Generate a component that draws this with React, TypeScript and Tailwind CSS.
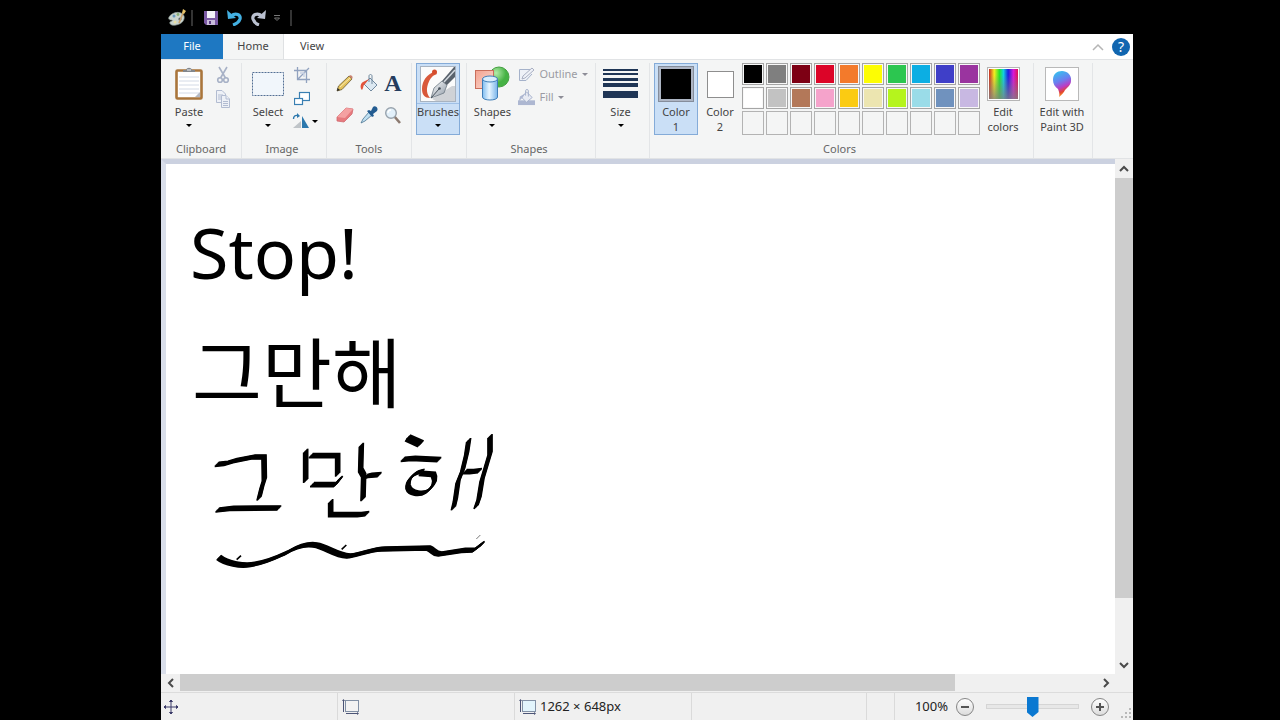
import React, { useState } from "react";

const palette = [
  ["Black", "#000000"],
  ["Gray-50%", "#7f7f7f"],
  ["Dark red", "#7d0014"],
  ["Red", "#dc0428"],
  ["Orange", "#f37a2b"],
  ["Yellow", "#fdfd03"],
  ["Green", "#2cc650"],
  ["Turquoise", "#0caee3"],
  ["Indigo", "#3f3fc8"],
  ["Purple", "#9a349f"],
  ["White", "#ffffff"],
  ["Gray-25%", "#c2c2c2"],
  ["Brown", "#b37859"],
  ["Rose", "#f5a3cb"],
  ["Gold", "#fbcb12"],
  ["Light yellow", "#ece5b0"],
  ["Lime", "#b5f41d"],
  ["Light turquoise", "#9adce8"],
  ["Blue-gray", "#7092be"],
  ["Lavender", "#c8b8e2"],
];

// The calligraphy nib is a short diagonal line dragged along each stroke
const nib = [-6, -4, -2, 0, 2, 4, 6];

const strokes = [
  "M110 133L138 130L165 122L220 111L252 111L253 178L246 200L237 236",
  "M112 270L155 265L298 264",
  "M377 92V183",
  "M392 107L473 107V164",
  "M396 194L466 194L482 174",
  "M544 74L542 150L551 166L549 238",
  "M556 170L570 166L599 164",
  "M452 243V284L538 284L562 281",
  "M681 56L720 74",
  "M684 51L725 69",
  "M668 118L700 115L778 119",
  "M728 154C700 157 682 180 684 200C690 222 725 225 743 213C765 195 768 178 760 163L722 160",
  "M866 60L860 100L848 150L834 185L826 240L820 265",
  "M854 155L875 155L900 152",
  "M930 48L930 100L918 140L906 180L897 235L888 261",
  "M116 412C138 430 188 440 218 433C260 427 290 412 320 398C350 380 380 371 405 375C440 380 465 405 505 408C540 405 570 388 610 387L745 384C762 390 760 402 780 402L850 391L882 390L908 370",
];

const Caret = ({ className = "fill-black" }: { className?: string }) => (
  <svg viewBox="0 0 6 3" className={`h-[3px] w-[6px] shrink-0 ${className}`}>
    <path d="M0 0H6L3 3Z" />
  </svg>
);

const Chevron = ({ turn, className = "stroke-[#4a4a4a]" }: { turn: string; className?: string }) => (
  <svg viewBox="0 0 10 10" className={`h-[10px] w-[10px] ${turn} ${className}`} fill="none" strokeWidth="2">
    <path d="M1 7L5 3L9 7" />
  </svg>
);

const Group = ({
  label,
  className,
  children,
}: {
  label?: string;
  className: string;
  children: React.ReactNode;
}) => (
  <section
    aria-label={label}
    className={`flex shrink-0 flex-col border-r border-[#e3e5e7] ${className}`}
  >
    <div className="flex h-[72px] shrink-0 justify-center">{children}</div>
    <p className="mt-1.5 text-center leading-4 text-[#666]">{label}</p>
  </section>
);

const BigButton = ({
  icon,
  lines,
  active = false,
  caret = false,
  split = false,
}: {
  icon: React.ReactNode;
  lines: string[];
  active?: boolean;
  caret?: boolean;
  split?: boolean;
}) => (
  <button
    type="button"
    className={`flex h-[72px] w-[44px] shrink-0 flex-col items-center border ${
      active ? "border-[#84abd8] bg-[#cadff6]" : "border-transparent"
    }`}
  >
    <span
      className={`flex h-[40px] w-full shrink-0 items-center justify-center ${
        split ? "border-b border-[#9fc0e6]" : ""
      }`}
    >
      {icon}
    </span>
    {lines.map((line) => (
      <span key={line} className="leading-[15px] whitespace-nowrap">
        {line}
      </span>
    ))}
    {caret && (
      <span className="flex h-3 items-center">
        <Caret />
      </span>
    )}
  </button>
);

const IconButton = ({
  label,
  className = "h-6 w-6",
  children,
}: {
  label: string;
  className?: string;
  children: React.ReactNode;
}) => (
  <button
    type="button"
    aria-label={label}
    className={`flex shrink-0 items-center justify-center ${className}`}
  >
    {children}
  </button>
);

const QuickAccess = () => (
  <header className="flex h-[34px] shrink-0 items-center bg-black pt-0.5 pl-1.5">
    <svg viewBox="0 0 20 20" className="h-5 w-5">
      <path d="M2 9C6 3 15 3 17 8C18 12 15 16 9 17C5 18 2 16 3 14C4 13 6 13 5 12C3 12 1 12 2 9Z" fill="#c9d3cd" stroke="#8b9a93" strokeWidth=".7" />
      <circle cx="7" cy="8" r="1.500" fill="#6798bd" />
      <circle cx="11" cy="6.500" r="1.400" fill="#86ad76" />
      <circle cx="8" cy="14" r="1.500" fill="#e8dfa6" />
      <circle cx="13" cy="11" r="1.600" fill="#55606a" />
      <path d="M12 15L16 5" stroke="#c9a069" strokeWidth="1.600" />
      <path d="M15 5L16 1L19 3L17 6Z" fill="#e7c268" />
    </svg>
    <span className="ml-1 h-4 w-[2px] bg-[#343434]" />
    <IconButton label="Save" className="ml-2 h-5 w-5">
      <svg viewBox="0 0 16 16" className="h-4 w-4">
        <path d="M1 1H15V15H3L1 13Z" fill="#7c5aa5" />
        <path d="M4 1H12V8H4Z" fill="#f4f2fa" />
        <path d="M4 10H12V15H4Z" fill="#c9bddb" />
        <path d="M6 11H8V14H6Z" fill="#5d3d85" />
      </svg>
    </IconButton>
    <IconButton label="Undo" className="ml-1 h-5 w-5">
      <svg viewBox="0 0 16 16" className="h-4 w-4">
        <path d="M4 6C9 2 14 5 13 9C12 12 9 14 6 15" fill="none" stroke="#43b0e2" strokeWidth="3.200" />
        <path d="M0 0L9 8L1 9Z" fill="#43b0e2" />
      </svg>
    </IconButton>
    <IconButton label="Redo" className="ml-[3px] h-5 w-5">
      <svg viewBox="0 0 16 16" className="h-4 w-4">
        <path d="M12 6C7 2 2 5 3 9C4 12 6 14 9 15" fill="none" stroke="#bac1d0" strokeWidth="3.200" />
        <path d="M16 0L7 8L15 9Z" fill="#bac1d0" />
      </svg>
    </IconButton>
    <IconButton label="Customize Quick Access Toolbar" className="h-5 w-[18px]">
      <svg viewBox="0 0 8 8" className="h-2 w-2" fill="none" stroke="#777">
        <path d="M1 1.500H7M1.500 4H6.500L4 6.500Z" />
      </svg>
    </IconButton>
    <span className="ml-1 h-4 w-[2px] bg-[#343434]" />
  </header>
);

const Tabs = () => (
  <nav className="flex h-[25px] shrink-0 bg-white text-[#444]">
    <button type="button" className="w-[62px] bg-[#1e78c2] text-white">
      File
    </button>
    <button type="button" className="w-[61px] border-r border-[#dfe1e3] bg-[#f4f5f5]">
      Home
    </button>
    <button type="button" className="w-[56px]">
      View
    </button>
    <div className="ml-auto flex items-center gap-1.5 pr-[3px]">
      <IconButton label="Minimize the Ribbon" className="h-5 w-4">
        <svg viewBox="0 0 12 8" className="h-2 w-3" fill="none" stroke="#b5b5b5" strokeWidth="1.500">
          <path d="M1 7L6 2L11 7" />
        </svg>
      </IconButton>
      <button
        type="button"
        aria-label="Help"
        className="h-[18px] w-[18px] rounded-full bg-[#1166b0] text-sm leading-[18px] text-white"
      >
        ?
      </button>
    </div>
  </nav>
);

const PasteIcon = () => (
  <svg viewBox="0 0 28 34" className="h-[34px] w-7">
    <rect x="1.500" y="3.500" width="25" height="28" rx="1" fill="#fff" stroke="#a9753b" strokeWidth="2.600" />
    <path d="M4 10H24M4 14H24M4 18H24M4 22H24M4 26H24" stroke="#d3dae6" />
    <path d="M20 30L25 25V30Z" fill="#b5b9c2" />
    <path d="M8 5V3H11C12 0 16 0 17 3H20V5Z" fill="#82878d" />
    <path d="M12 3H16" stroke="#eef0f2" />
  </svg>
);

const BrushesIcon = () => (
  <svg viewBox="0 0 36 36" className="h-9 w-9">
    <defs>
      <linearGradient id="nib" x1="0" y1="0" x2="1" y2="1">
        <stop offset="0" stopColor="#ffffff" />
        <stop offset="1" stopColor="#8b97a4" />
      </linearGradient>
    </defs>
    <rect x=".5" y=".5" width="35" height="35" fill="#fbfbfb" stroke="#a8b3c0" />
    <path d="M12 33L32 20H35V35H16Z" fill="#cfd2d6" />
    <path d="M14 6C7 8 2 15 2 23C2 29 5 32 10 32C7 28 6 24 8 18C10 12 13 9 17 8Z" fill="#d9583a" />
    <circle cx="14.500" cy="6" r="2.500" fill="#d54c2c" />
    <path d="M11 32L14 22L22 15L27 19L24 27Z" fill="url(#nib)" stroke="#6c7883" strokeWidth=".8" />
    <path d="M11 32L19 23" stroke="#46505b" />
    <circle cx="19.500" cy="22.500" r="1.300" fill="#46505b" />
    <path d="M22 15L34 1H35V11L27 19Z" fill="#59626c" />
    <path d="M24 16L35 4" stroke="#d3d9df" strokeWidth="1.500" />
  </svg>
);

const ShapesIcon = () => (
  <svg viewBox="0 0 36 36" className="h-9 w-9">
    <defs>
      <linearGradient id="sq" x1="0" y1="0" x2="1" y2="1">
        <stop offset="0" stopColor="#f3a28f" />
        <stop offset="1" stopColor="#fbdcd4" />
      </linearGradient>
      <radialGradient id="ball" cx=".35" cy=".3">
        <stop offset="0" stopColor="#b4ecaa" />
        <stop offset="1" stopColor="#45b244" />
      </radialGradient>
      <linearGradient id="can">
        <stop offset="0" stopColor="#80bdf0" />
        <stop offset=".45" stopColor="#e7f5ff" />
        <stop offset="1" stopColor="#78b4ea" />
      </linearGradient>
    </defs>
    <circle cx="25" cy="11" r="10" fill="url(#ball)" stroke="#45a142" />
    <rect x="1.500" y="4.500" width="18" height="18" fill="url(#sq)" stroke="#c96f5c" />
    <path d="M8.500 13V31C8.500 35 23.500 35 23.500 31V13Z" fill="url(#can)" stroke="#407eb8" />
    <ellipse cx="16" cy="13" rx="7.500" ry="3" fill="#d9eefe" stroke="#407eb8" />
  </svg>
);

const Ribbon = () => (
  <div className="flex h-[100px] shrink-0 overflow-hidden border-y border-[#e1e3e5] bg-[#f4f5f5] pt-[3px] text-[#444]">
    <Group label="Clipboard" className="w-[81px]">
      <BigButton icon={<PasteIcon />} lines={["Paste"]} caret />
      <div className="flex flex-col">
        <IconButton label="Cut">
          <svg viewBox="0 0 16 18" className="h-[18px] w-4" fill="none" stroke="#a7b1c6" strokeWidth="1.600">
            <path d="M4 1L10.500 12M12 1L5.500 12" />
            <circle cx="5" cy="14" r="2.300" />
            <circle cx="11" cy="14" r="2.300" />
          </svg>
        </IconButton>
        <IconButton label="Copy">
          <svg viewBox="0 0 16 18" className="h-[18px] w-4" fill="#eef1f7" stroke="#b2bcd1">
            <path d="M1.500 .5H7L10.500 4V12.500H1.500Z" />
            <path d="M3 5H8M3 7H8M3 9H8" />
            <path d="M6.500 5.500H11L14.500 9V17.500H6.500Z" />
            <path d="M11 5.500V9H14.500M8 11.500H13M8 13.500H13M8 15.500H13" />
          </svg>
        </IconButton>
      </div>
    </Group>

    <Group label="Image" className="w-[85px] pr-1">
      <BigButton
        icon={
          <svg viewBox="0 0 32 24" className="h-6 w-8">
            <rect x=".5" y=".5" width="31" height="23" fill="#f1f6fb" stroke="#536f94" strokeDasharray="2 1" />
          </svg>
        }
        lines={["Select"]}
        caret
      />
      <div className="flex flex-col">
        <IconButton label="Crop">
          <svg viewBox="0 0 16 16" className="h-4 w-4" fill="none" stroke="#91a2bf" strokeWidth="1.300">
            <path d="M3.500 0V12.500H16M0 3.500H12.500V16M4 12L15 1" />
            <path d="M6 6H10V10" stroke="#c6d0e2" />
          </svg>
        </IconButton>
        <IconButton label="Resize">
          <svg viewBox="0 0 16 16" className="h-4 w-4" fill="#fff" stroke="#397fb2" strokeWidth="1.200">
            <rect x="5.500" y="1.500" width="10" height="8" />
            <rect x=".5" y="7.500" width="8" height="6" />
          </svg>
        </IconButton>
        <button type="button" aria-label="Rotate" className="flex h-5 items-center gap-0.5 pl-0.5">
          <svg viewBox="0 0 18 16" className="h-4 w-[18px]">
            <path d="M1 15H9V8Z" fill="#bfc4c8" />
            <path d="M10 15V3L17 15Z" fill="#2c78ad" />
            <path d="M1.500 6C1.500 3 3 2 6 2.500" fill="none" stroke="#2c78ad" strokeWidth="1.400" />
            <path d="M5 0L8 3L5 5Z" fill="#2c78ad" />
          </svg>
          <Caret />
        </button>
      </div>
    </Group>

    <Group label="Tools" className="w-[85px]">
      <div className="grid grid-cols-3 grid-rows-2 gap-y-2 self-center">
        <IconButton label="Pencil">
          <svg viewBox="0 0 18 18" className="h-[18px] w-[18px]">
            <path d="M1 17L2.500 12L13 2L16 5L6 15.500Z" fill="#e3c25d" stroke="#6b5c34" strokeWidth=".8" />
            <path d="M4 13L14 4" stroke="#fbedb4" />
            <path d="M1 17L1.500 14L4 16Z" fill="#2b2b2b" />
            <path d="M13 2C14 0 18 2 16 5Z" fill="#c9826f" />
          </svg>
        </IconButton>
        <IconButton label="Fill with color">
          <svg viewBox="0 0 18 18" className="h-[18px] w-[18px]">
            <path d="M10 4L17 11L11 17L4 10Z" fill="#dce8f1" stroke="#71899f" />
            <path d="M9 8V2C9 0 12 0 12 2V10" fill="none" stroke="#71899f" />
            <path d="M9 5L3 8C0 10 0 14 2 16C4 13 3 11 5 10Z" fill="#e2533b" />
          </svg>
        </IconButton>
        <IconButton label="Text">
          <span className="font-['Liberation_Serif',serif] text-2xl leading-6 font-bold text-[#243c5e]">A</span>
        </IconButton>
        <IconButton label="Eraser">
          <svg viewBox="0 0 18 18" className="h-[18px] w-[18px]">
            <path d="M1 11L10 2L17 3L16 8L8 16L1 15Z" fill="#e67a7e" stroke="#d06a70" strokeWidth=".8" />
            <path d="M1 11L10 2L17 3L9 12Z" fill="#f4a1a2" />
          </svg>
        </IconButton>
        <IconButton label="Color picker">
          <svg viewBox="0 0 18 18" className="h-[18px] w-[18px]">
            <path d="M1 17L3 13L9 6L12 9L5 15Z" fill="#bfe0f2" stroke="#4a7391" strokeWidth=".8" />
            <path d="M7 5L9 4L11 5L13 1C15 -1 19 2 17 5L13 8L14 10L12 11Z" fill="#235c91" />
          </svg>
        </IconButton>
        <IconButton label="Magnifier">
          <svg viewBox="0 0 18 18" className="h-[18px] w-[18px]">
            <path d="M10 10L16 17" stroke="#8c7a70" strokeWidth="2.600" />
            <circle cx="7" cy="7" r="5.300" fill="#e2f0fa" stroke="#98a3ad" strokeWidth="1.400" />
            <path d="M4 7C4 5 5 4 7 4" fill="none" stroke="#fff" strokeWidth="1.300" />
          </svg>
        </IconButton>
      </div>
    </Group>

    <Group className="w-[55px] pr-0.5">
      <BigButton icon={<BrushesIcon />} lines={["Brushes"]} active caret split />
    </Group>

    <Group label="Shapes" className="w-[129px] pr-1">
      <BigButton icon={<ShapesIcon />} lines={["Shapes"]} caret />
      <div className="flex flex-col pl-1 text-[#9b9ba3]">
        <button type="button" disabled className="flex h-[23px] items-center gap-1">
          <svg viewBox="0 0 17 15" className="h-[15px] w-[17px]" fill="#eef1f7">
            <path d="M12 2.500H1.500V13.500H8L14 7" stroke="#a5b2ca" />
            <path d="M4 12L5 9L14 1L16 3L7 11Z" stroke="#a9afc2" />
          </svg>
          <span>Outline</span>
          <Caret className="fill-[#8d8d97]" />
        </button>
        <button type="button" disabled className="flex h-[23px] items-center gap-1">
          <svg viewBox="0 0 18 18" className="h-[17px] w-[17px]">
            <path d="M0 12H18V17H0Z" fill="#adb7d1" />
            <path d="M9 3L15 9L9 14L4 9Z" fill="#e8ebf3" stroke="#a5b0cb" />
            <path d="M8 7V2C8 0 11 0 11 2V8" fill="none" stroke="#a5b0cb" />
            <path d="M7 5L2 8L1 13L5 9Z" fill="#adb7d1" />
          </svg>
          <span>Fill</span>
          <Caret className="fill-[#8d8d97]" />
        </button>
      </div>
    </Group>

    <Group className="w-[54px] pr-1">
      <BigButton
        icon={
          <svg viewBox="0 0 35 30" className="h-[30px] w-[35px] fill-[#1f3555]">
            <path d="M0 0H35V2H0ZM0 4H35V6H0ZM0 9H35V12H0ZM0 14H35V18H0ZM0 22H35V29H0Z" />
          </svg>
        }
        lines={["Size"]}
        caret
      />
    </Group>

    <Group label="Colors" className="w-[384px] pr-1">
      <BigButton
        icon={<span className="h-9 w-9 border border-[#858d9b] bg-black outline-2 -outline-offset-3 outline-[#adb5c4]" />}
        lines={["Color", "1"]}
        active
      />
      <BigButton
        icon={<span className="h-[27px] w-[27px] border border-[#8e8e8e] bg-white" />}
        lines={["Color", "2"]}
      />
      <div className="mr-px grid grid-cols-10 gap-0.5">
        {palette.map(([name, color]) => (
          <button
            key={name}
            type="button"
            aria-label={name}
            className="h-[22px] w-[22px] border border-[#a5a5a5] bg-[#f8f8f8] p-px"
          >
            <span className="block h-full w-full" style={{ backgroundColor: color }} />
          </button>
        ))}
        {Array.from({ length: 10 }, (_, i) => (
          <button
            key={i}
            type="button"
            aria-label={`Custom color ${i + 1}`}
            className="h-6 w-[22px] border border-[#b3b3b3]"
          />
        ))}
      </div>
      <BigButton
        icon={
          <span className="h-[34px] w-[33px] border border-[#b5b5b5] bg-white p-px">
            <span className="block h-full w-full bg-[linear-gradient(to_bottom,transparent_20%,#808080cc),linear-gradient(to_right,#c62b25,#f6ee20_18%,#25e32b_36%,#12cfe0_50%,#1a1ee0_66%,#d819d8_84%,#dd1450)]" />
          </span>
        }
        lines={["Edit", "colors"]}
      />
    </Group>

    <Group className="w-[59px] pr-0.5">
      <BigButton
        icon={
          <svg viewBox="0 0 34 34" className="h-[34px] w-[34px]">
            <defs>
              <linearGradient id="drop" x1=".2" y1="0" x2=".5" y2="1">
                <stop offset="0" stopColor="#32c4ee" />
                <stop offset=".4" stopColor="#6a7ff0" />
                <stop offset=".65" stopColor="#bb3cc5" />
                <stop offset=".82" stopColor="#e4442f" />
                <stop offset="1" stopColor="#f9b428" />
              </linearGradient>
            </defs>
            <rect x=".5" y=".5" width="33" height="33" fill="#fff" stroke="#b9b9b9" />
            <path d="M8 13C8 7 12 4 17 4C22 4 27 8 26 14C26 18 22 21 20 23C19 25 17 28 14 30C15 27 14 25 13 22C10 20 8 17 8 13Z" fill="url(#drop)" />
          </svg>
        }
        lines={["Edit with", "Paint 3D"]}
      />
    </Group>
  </div>
);

const Drawing = () => (
  <main className="relative min-w-0 flex-1 overflow-hidden border-t-[5px] border-l-[5px] border-t-[#cbd1e0] border-l-[#d9deea] bg-white text-black">
    <p className="absolute top-[38px] left-6 font-['Noto_Sans',sans-serif] text-[70px] leading-[100px]">Stop!</p>
    <p className="absolute top-[155px] left-[26px] font-['Noto_Sans_CJK_KR',sans-serif] text-[76px] leading-[100px] whitespace-nowrap">
      그만해
    </p>
    <svg
      viewBox="0 0 990 480"
      role="img"
      aria-label="Brush strokes"
      className="absolute top-[256px] left-[14px] h-[160px] w-[330px]"
      fill="none"
      stroke="#000"
      strokeWidth="5"
    >
      {nib.map((n) => (
        <g key={n} transform={`translate(${n} ${-n})`}>
          {strokes.map((d) => (
            <path key={d} d={d} />
          ))}
        </g>
      ))}
      <path d="M170 419L183 407M485 388L499 375" />
      <path d="M889 357L901 345" stroke="#777" strokeWidth="3" />
    </svg>
  </main>
);

const CanvasSizeIcon = ({ className }: { className: string }) => (
  <svg viewBox="0 0 18 16" className={`h-4 w-[18px] shrink-0 ${className}`}>
    <rect x="3.500" y="1.500" width="13" height="11" stroke="#8290a5" />
    <path d="M1.500 1V13M4 14.500H16" stroke="#4c5577" />
    <path d="M0 2H3L1.500 0ZM15 13V16L17 14.500Z" fill="#4c5577" />
  </svg>
);

const StatusBar = () => {
  const [zoom, setZoom] = useState(50);
  return (
    <footer className="flex h-[28px] shrink-0 items-center border-t border-[#dcdcdc] bg-[#f0f0f0] text-[13px] text-[#222]">
      <div className="flex h-full w-[177px] items-center border-r border-[#dadada] pl-0.5">
        <svg viewBox="0 0 16 16" className="h-4 w-4" fill="#3a3a68" stroke="#3a3a68">
          <path d="M8 2V14M2 8H14" />
          <path d="M6.500 2.500L8 1L9.500 2.500ZM6.500 13.500L8 15L9.500 13.500ZM2.500 6.500L1 8L2.500 9.500ZM13.500 6.500L15 8L13.500 9.500Z" />
        </svg>
      </div>
      <div className="flex h-full w-[177px] items-center border-r border-[#dadada] pl-1">
        <CanvasSizeIcon className="fill-[#f3f3f3]" />
      </div>
      <div className="flex h-full w-[177px] items-center gap-[3px] border-r border-[#dadada] pl-1">
        <CanvasSizeIcon className="fill-[#e2f4fc]" />
        <span>1262 × 648px</span>
      </div>
      <div className="h-full flex-1 border-r border-[#dadada]" />
      <div className="h-full w-[28px] border-r border-[#dadada]" />
      <div className="flex h-full items-center pl-5">
        <label htmlFor="zoom">100%</label>
        <button
          type="button"
          aria-label="Zoom out"
          className="ml-2 flex h-[18px] w-[18px] items-center justify-center rounded-full border border-[#858585] bg-linear-to-b from-white to-[#dcdcdc]"
        >
          <span className="h-0.5 w-2 bg-[#555]" />
        </button>
        <input
          id="zoom"
          type="range"
          value={zoom}
          onChange={(e) => setZoom(Number(e.target.value))}
          className="mx-3 h-5 w-[93px] appearance-none bg-transparent [&::-webkit-slider-runnable-track]:h-[5px] [&::-webkit-slider-runnable-track]:border [&::-webkit-slider-runnable-track]:border-[#d5d5d5] [&::-webkit-slider-runnable-track]:bg-[#e7e7e7] [&::-webkit-slider-thumb]:-mt-2 [&::-webkit-slider-thumb]:h-5 [&::-webkit-slider-thumb]:w-3 [&::-webkit-slider-thumb]:appearance-none [&::-webkit-slider-thumb]:bg-[#0a78d1] [&::-webkit-slider-thumb]:[clip-path:polygon(0_0,100%_0,100%_75%,50%_100%,0_75%)]"
        />
        <button
          type="button"
          aria-label="Zoom in"
          className="flex h-[18px] w-[18px] items-center justify-center rounded-full border border-[#858585] bg-linear-to-b from-white to-[#dcdcdc]"
        >
          <svg viewBox="0 0 10 10" className="h-[10px] w-[10px] stroke-[#555]" strokeWidth="2">
            <path d="M5 1V9M1 5H9" />
          </svg>
        </button>
        <svg viewBox="0 0 12 12" className="mt-0.5 ml-3 h-3 w-3 self-end fill-[#b9b9b9]">
          <path d="M8 0H10V2H8ZM8 4H10V6H8ZM4 4H6V6H4ZM8 8H10V10H8ZM4 8H6V10H4ZM0 8H2V10H0Z" />
        </svg>
      </div>
    </footer>
  );
};

const App = () => (
  <div className="h-screen bg-black pr-[147px] pl-[161px]">
    <div className="flex h-full flex-col overflow-hidden bg-[#f0f0f0] font-['Noto_Sans',sans-serif] text-[11px]">
      <QuickAccess />
      <Tabs />
      <Ribbon />
      <div className="flex min-h-0 flex-1">
        <Drawing />
        <div className="flex w-[18px] flex-col items-center">
          <IconButton label="Scroll up" className="h-[19px] w-full">
            <Chevron turn="rotate-0" />
          </IconButton>
          <div className="flex w-full flex-1 flex-col">
            <div className="w-full flex-[420] bg-[#cdcdcd]" />
            <div className="flex-[57]" />
          </div>
          <IconButton label="Scroll down" className="h-[19px] w-full">
            <Chevron turn="rotate-180" />
          </IconButton>
        </div>
      </div>
      <div className="flex h-[18px] shrink-0 pr-[18px]">
        <IconButton label="Scroll left" className="h-full w-[19px]">
          <Chevron turn="-rotate-90" />
        </IconButton>
        <div className="h-[17px] flex-[775] bg-[#cdcdcd]" />
        <div className="flex-[141]" />
        <IconButton label="Scroll right" className="h-full w-[19px]">
          <Chevron turn="rotate-90" />
        </IconButton>
      </div>
      <StatusBar />
    </div>
  </div>
);

export default App;
